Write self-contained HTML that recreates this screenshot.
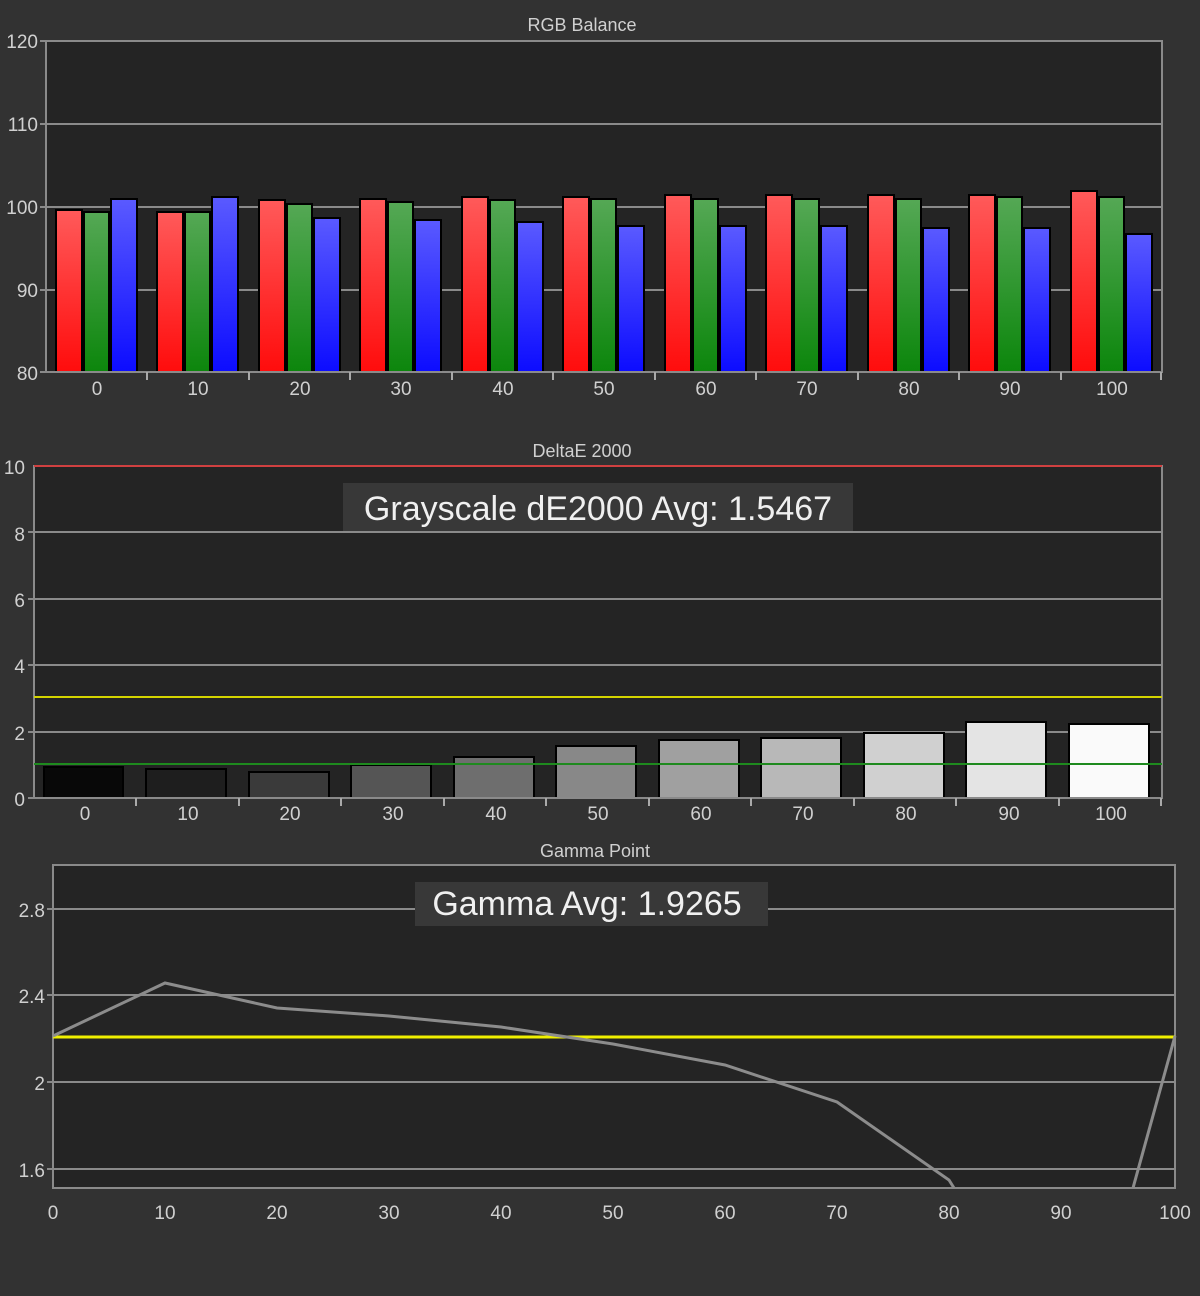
<!DOCTYPE html>
<html><head><meta charset="utf-8"><style>
html,body{margin:0;padding:0;background:#333;}
svg{display:block}
text{font-family:"Liberation Sans",sans-serif;fill:#d0d0d0;}
</style></head><body>
<svg width="1200" height="1296" viewBox="0 0 1200 1296" xmlns="http://www.w3.org/2000/svg">
<defs>
<linearGradient id="r" x1="0" y1="0" x2="0" y2="1"><stop offset="0" stop-color="#ff5a5a"/><stop offset="1" stop-color="#ff0c0c"/></linearGradient>
<linearGradient id="g" x1="0" y1="0" x2="0" y2="1"><stop offset="0" stop-color="#55a855"/><stop offset="1" stop-color="#0c860c"/></linearGradient>
<linearGradient id="b" x1="0" y1="0" x2="0" y2="1"><stop offset="0" stop-color="#5a5aff"/><stop offset="1" stop-color="#0c0cff"/></linearGradient>
</defs>
<rect width="1200" height="1296" fill="#323232"/>
<!-- Chart 1 -->
<text x="582" y="31" font-size="18" text-anchor="middle">RGB Balance</text>
<rect x="46" y="41" width="1116" height="331" fill="#242424" stroke="#8a8a8a" stroke-width="2"/>
<g stroke="#8a8a8a" stroke-width="2">
<line x1="40" y1="124" x2="1162" y2="124"/><line x1="40" y1="207" x2="1162" y2="207"/><line x1="40" y1="290" x2="1162" y2="290"/><line x1="40" y1="41" x2="46" y2="41"/><line x1="40" y1="372" x2="46" y2="372"/>
</g>
<g font-size="19" text-anchor="end"><text x="38" y="48">120</text><text x="38" y="131">110</text><text x="38" y="214">100</text><text x="38" y="297">90</text><text x="38" y="380">80</text></g>
<g stroke="#000" stroke-width="2">
<rect x="56" y="210" width="26" height="162" fill="url(#r)"/><rect x="84" y="212" width="25" height="160" fill="url(#g)"/><rect x="111" y="199" width="26" height="173" fill="url(#b)"/>
<rect x="157" y="212" width="26" height="160" fill="url(#r)"/><rect x="185" y="212" width="25" height="160" fill="url(#g)"/><rect x="212" y="197" width="26" height="175" fill="url(#b)"/>
<rect x="259" y="200" width="26" height="172" fill="url(#r)"/><rect x="287" y="204" width="25" height="168" fill="url(#g)"/><rect x="314" y="218" width="26" height="154" fill="url(#b)"/>
<rect x="360" y="199" width="26" height="173" fill="url(#r)"/><rect x="388" y="202" width="25" height="170" fill="url(#g)"/><rect x="415" y="220" width="26" height="152" fill="url(#b)"/>
<rect x="462" y="197" width="26" height="175" fill="url(#r)"/><rect x="490" y="200" width="25" height="172" fill="url(#g)"/><rect x="517" y="222" width="26" height="150" fill="url(#b)"/>
<rect x="563" y="197" width="26" height="175" fill="url(#r)"/><rect x="591" y="199" width="25" height="173" fill="url(#g)"/><rect x="618" y="226" width="26" height="146" fill="url(#b)"/>
<rect x="665" y="195" width="26" height="177" fill="url(#r)"/><rect x="693" y="199" width="25" height="173" fill="url(#g)"/><rect x="720" y="226" width="26" height="146" fill="url(#b)"/>
<rect x="766" y="195" width="26" height="177" fill="url(#r)"/><rect x="794" y="199" width="25" height="173" fill="url(#g)"/><rect x="821" y="226" width="26" height="146" fill="url(#b)"/>
<rect x="868" y="195" width="26" height="177" fill="url(#r)"/><rect x="896" y="199" width="25" height="173" fill="url(#g)"/><rect x="923" y="228" width="26" height="144" fill="url(#b)"/>
<rect x="969" y="195" width="26" height="177" fill="url(#r)"/><rect x="997" y="197" width="25" height="175" fill="url(#g)"/><rect x="1024" y="228" width="26" height="144" fill="url(#b)"/>
<rect x="1071" y="191" width="26" height="181" fill="url(#r)"/><rect x="1099" y="197" width="25" height="175" fill="url(#g)"/><rect x="1126" y="234" width="26" height="138" fill="url(#b)"/>
</g>
<line x1="46" y1="372" x2="1162" y2="372" stroke="#8a8a8a" stroke-width="2"/>
<g stroke="#aaa" stroke-width="2"><line x1="147" y1="372" x2="147" y2="380"/><line x1="249" y1="372" x2="249" y2="380"/><line x1="350" y1="372" x2="350" y2="380"/><line x1="452" y1="372" x2="452" y2="380"/><line x1="553" y1="372" x2="553" y2="380"/><line x1="655" y1="372" x2="655" y2="380"/><line x1="756" y1="372" x2="756" y2="380"/><line x1="858" y1="372" x2="858" y2="380"/><line x1="959" y1="372" x2="959" y2="380"/><line x1="1061" y1="372" x2="1061" y2="380"/><line x1="1161" y1="372" x2="1161" y2="380"/></g>
<g font-size="19" text-anchor="middle"><text x="97" y="395">0</text><text x="198" y="395">10</text><text x="300" y="395">20</text><text x="401" y="395">30</text><text x="503" y="395">40</text><text x="604" y="395">50</text><text x="706" y="395">60</text><text x="807" y="395">70</text><text x="909" y="395">80</text><text x="1010" y="395">90</text><text x="1112" y="395">100</text></g>

<!-- Chart 2 -->
<text x="582" y="457" font-size="18" text-anchor="middle">DeltaE 2000</text>
<rect x="34" y="466" width="1128" height="332" fill="#242424" stroke="#8a8a8a" stroke-width="2"/>
<g stroke="#8a8a8a" stroke-width="2"><line x1="28" y1="532" x2="1162" y2="532"/><line x1="28" y1="599" x2="1162" y2="599"/><line x1="28" y1="665" x2="1162" y2="665"/><line x1="28" y1="732" x2="1162" y2="732"/><line x1="28" y1="798" x2="34" y2="798"/></g>
<line x1="34" y1="466" x2="1162" y2="466" stroke="#d04040" stroke-width="2"/>
<line x1="34" y1="697" x2="1162" y2="697" stroke="#d4d400" stroke-width="2"/>
<g font-size="19" text-anchor="end"><text x="25" y="474">10</text><text x="25" y="541">8</text><text x="25" y="607">6</text><text x="25" y="673">4</text><text x="25" y="740">2</text><text x="25" y="806">0</text></g>
<rect x="343" y="483" width="510" height="48" fill="#383838"/>
<text x="598" y="520" font-size="34" text-anchor="middle" fill="#f0f0f0" style="fill:#f0f0f0">Grayscale dE2000 Avg: 1.5467</text>
<g stroke="#000" stroke-width="2">
<rect x="44" y="767" width="79" height="31" fill="#080808"/>
<rect x="146" y="769" width="80" height="29" fill="#1e1e1e"/>
<rect x="249" y="772" width="80" height="26" fill="#3a3a3a"/>
<rect x="351" y="765" width="80" height="33" fill="#555"/>
<rect x="454" y="757" width="80" height="41" fill="#6e6e6e"/>
<rect x="556" y="746" width="80" height="52" fill="#888"/>
<rect x="659" y="740" width="80" height="58" fill="#a0a0a0"/>
<rect x="761" y="738" width="80" height="60" fill="#b8b8b8"/>
<rect x="864" y="733" width="80" height="65" fill="#d0d0d0"/>
<rect x="966" y="722" width="80" height="76" fill="#e4e4e4"/>
<rect x="1069" y="724" width="80" height="74" fill="#fafafa"/>
</g>
<line x1="34" y1="764" x2="1162" y2="764" stroke="#1e8a1e" stroke-width="2"/>
<line x1="34" y1="798" x2="1162" y2="798" stroke="#8a8a8a" stroke-width="2"/>
<g stroke="#aaa" stroke-width="2"><line x1="136" y1="798" x2="136" y2="806"/><line x1="239" y1="798" x2="239" y2="806"/><line x1="341" y1="798" x2="341" y2="806"/><line x1="444" y1="798" x2="444" y2="806"/><line x1="546" y1="798" x2="546" y2="806"/><line x1="649" y1="798" x2="649" y2="806"/><line x1="751" y1="798" x2="751" y2="806"/><line x1="854" y1="798" x2="854" y2="806"/><line x1="956" y1="798" x2="956" y2="806"/><line x1="1059" y1="798" x2="1059" y2="806"/><line x1="1161" y1="798" x2="1161" y2="806"/></g>
<g font-size="19" text-anchor="middle"><text x="85" y="820">0</text><text x="188" y="820">10</text><text x="290" y="820">20</text><text x="393" y="820">30</text><text x="496" y="820">40</text><text x="598" y="820">50</text><text x="701" y="820">60</text><text x="803" y="820">70</text><text x="906" y="820">80</text><text x="1009" y="820">90</text><text x="1111" y="820">100</text></g>

<!-- Chart 3 -->
<text x="595" y="857" font-size="18" text-anchor="middle">Gamma Point</text>
<rect x="53" y="865" width="1122" height="323" fill="#242424" stroke="#8a8a8a" stroke-width="2"/>
<g stroke="#8a8a8a" stroke-width="2"><line x1="47" y1="909" x2="1175" y2="909"/><line x1="47" y1="995" x2="1175" y2="995"/><line x1="47" y1="1082" x2="1175" y2="1082"/><line x1="47" y1="1169" x2="1175" y2="1169"/></g>
<g font-size="19" text-anchor="end"><text x="45" y="917">2.8</text><text x="45" y="1003">2.4</text><text x="45" y="1090">2</text><text x="45" y="1177">1.6</text></g>
<rect x="415" y="882" width="353" height="44" fill="#383838"/>
<text x="587" y="915" font-size="34" text-anchor="middle" style="fill:#f0f0f0">Gamma Avg: 1.9265</text>
<line x1="53" y1="1037" x2="1175" y2="1037" stroke="#f0f000" stroke-width="3"/>
<polyline points="53,1036 165,983 277,1008 389,1016 501,1027 613,1044 725,1065 837,1102 949,1180 954,1188" fill="none" stroke="#8c8c8c" stroke-width="3"/>
<polyline points="1133,1188 1175,1036" fill="none" stroke="#8c8c8c" stroke-width="3"/>
<g font-size="19" text-anchor="middle"><text x="53" y="1219">0</text><text x="165" y="1219">10</text><text x="277" y="1219">20</text><text x="389" y="1219">30</text><text x="501" y="1219">40</text><text x="613" y="1219">50</text><text x="725" y="1219">60</text><text x="837" y="1219">70</text><text x="949" y="1219">80</text><text x="1061" y="1219">90</text><text x="1175" y="1219">100</text></g>
</svg>
</body></html>
